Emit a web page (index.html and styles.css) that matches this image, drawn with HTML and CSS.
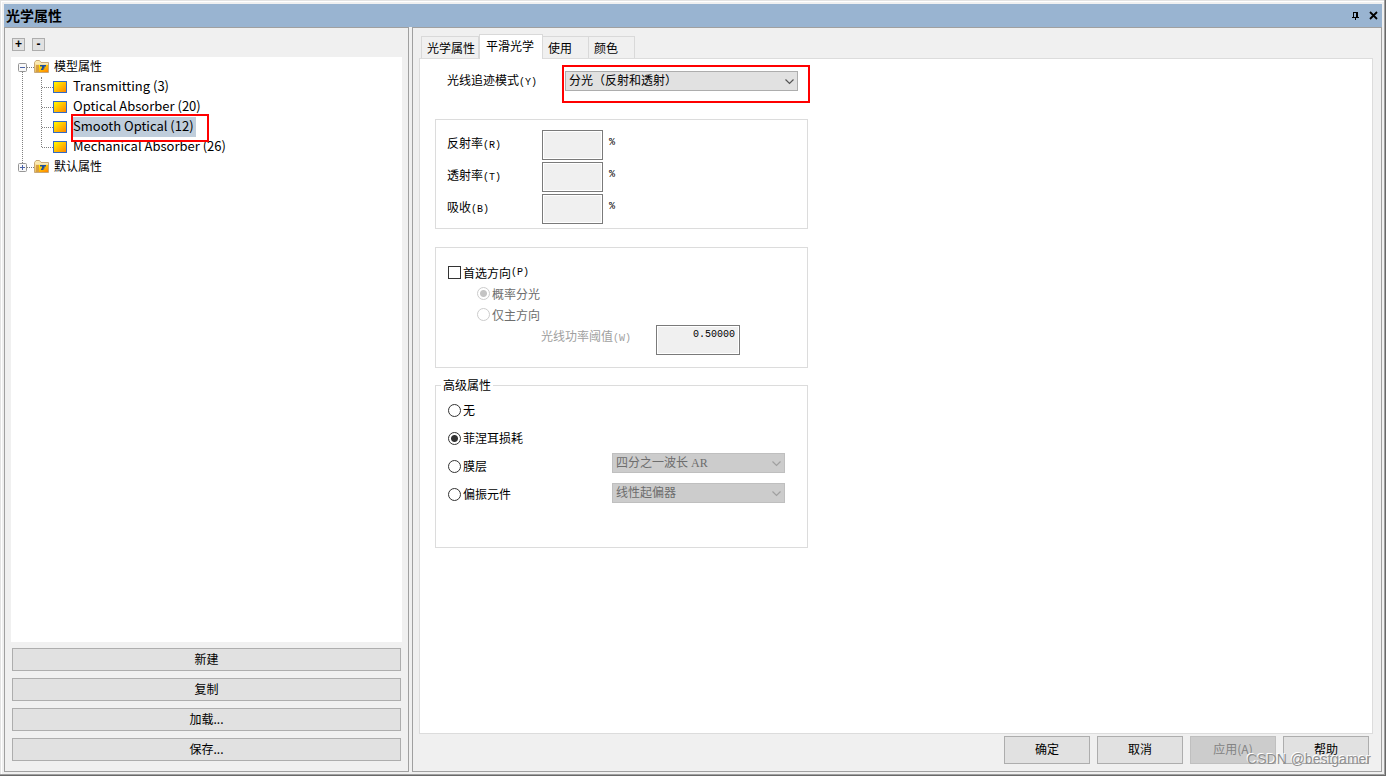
FILE: index.html
```html
<!DOCTYPE html>
<html lang="zh-CN">
<head>
    <meta charset="UTF-8">
    <meta name="viewport" content="width=device-width, initial-scale=1.0">
    <title>光学属性</title>
    <link rel="stylesheet" href="styles.css">
</head>
<body>
    <svg class="defs" width="0" height="0">
        <defs>
            <linearGradient id="gold" x1="0" y1="0" x2="1" y2="1">
                <stop offset="0" stop-color="#ffff00"/>
                <stop offset="1" stop-color="#ff8000"/>
            </linearGradient>
            <linearGradient id="folder-fill" x1="0" y1="0" x2="0" y2="1">
                <stop offset="0" stop-color="#fff0b8"/>
                <stop offset="1" stop-color="#e9bd55"/>
            </linearGradient>
            <symbol id="folder" viewBox="0 0 15 14">
                <path d="M0.5 12.5V2.5L2 0.5H5.5L7 2.5H14.5V12.5Z" fill="url(#folder-fill)" stroke="#c8a878"/>
                <path d="M1 3.5H14" stroke="#f8e8b8"/>
                <rect x="2" y="5" width="12" height="7" fill="url(#gold)"/>
                <path d="M2 5H5V12H2Z" fill="#d8a040"/>
                <path d="M6 5H12V6.500H10.500V8.500H9.500V10H7V8.500H8V6.500H6Z" fill="#204f9c"/>
            </symbol>
            <symbol id="swatch" viewBox="0 0 14 12">
                <rect x="0.5" y="0.5" width="13" height="11" fill="url(#gold)" stroke="#316ac5"/>
            </symbol>
            <symbol id="chevron" viewBox="0 0 9 6">
                <path d="M0.5 0.5L4.5 4.5L8.5 0.5" fill="none" stroke="currentColor" stroke-width="1.2"/>
            </symbol>
        </defs>
    </svg>

    <div class="window">
        <header class="titlebar">
            <h1>光学属性</h1>
            <button class="title-btn" aria-label="固定">
                <svg width="9" height="9" viewBox="0 0 9 9" shape-rendering="crispEdges"><path d="M2.5 6V1.5H6M1 6.5H8M4.5 7V9" fill="none" stroke="#000"/><path d="M5 1H7V6H5Z"/></svg>
            </button>
            <button class="title-btn" aria-label="关闭">
                <svg width="9" height="9" viewBox="0 0 9 9"><path d="M1 1L8 8M8 1L1 8" stroke="#000" stroke-width="1.8"/></svg>
            </button>
        </header>

        <div class="panes">
            <aside class="pane sidebar">
                <div class="tree-tools">
                    <button aria-label="展开">+</button>
                    <button aria-label="折叠">-</button>
                </div>
                <ul class="tree">
                    <li class="branch open">
                        <div class="node">
                            <svg class="expander" viewBox="0 0 9 9"><rect x="0.5" y="0.5" width="8" height="8" rx="1" fill="#f8f8f8" stroke="#969696"/><path d="M2 4.5H7" stroke="#4b63a7"/></svg>
                            <svg class="folder"><use href="#folder"/></svg>
                            <span>模型属性</span>
                        </div>
                        <ul class="leaves">
                            <li><svg class="swatch"><use href="#swatch"/></svg><span>Transmitting (3)</span></li>
                            <li><svg class="swatch"><use href="#swatch"/></svg><span>Optical Absorber (20)</span></li>
                            <li><svg class="swatch"><use href="#swatch"/></svg><span class="selected">Smooth Optical (12)</span><i class="mark mark-node"></i></li>
                            <li><svg class="swatch"><use href="#swatch"/></svg><span>Mechanical Absorber (26)</span></li>
                        </ul>
                    </li>
                    <li class="branch">
                        <div class="node">
                            <svg class="expander" viewBox="0 0 9 9"><rect x="0.5" y="0.5" width="8" height="8" rx="1" fill="#f8f8f8" stroke="#969696"/><path d="M2 4.5H7M4.5 2V7" stroke="#4b63a7"/></svg>
                            <svg class="folder"><use href="#folder"/></svg>
                            <span>默认属性</span>
                        </div>
                    </li>
                </ul>
                <div class="side-actions">
                    <button class="btn">新建</button>
                    <button class="btn">复制</button>
                    <button class="btn">加载...</button>
                    <button class="btn">保存...</button>
                </div>
            </aside>

            <main class="pane content">
                <nav class="tabs" role="tablist">
                    <button class="tab first" role="tab">光学属性</button>
                    <button class="tab active" role="tab" aria-selected="true">平滑光学</button>
                    <button class="tab" role="tab">使用</button>
                    <button class="tab" role="tab">颜色</button>
                </nav>

                <form class="page" id="props">
                    <div class="mode-row">
                        <label for="mode">光线追迹模式<span class="key">(Y)</span></label>
                        <div class="select mode">
                            <select id="mode"><option>分光（反射和透射）</option></select>
                            <svg class="chevron"><use href="#chevron"/></svg>
                            <i class="mark mark-mode"></i>
                        </div>
                    </div>

                    <div class="group rates">
                        <label for="refl">反射率<span class="key">(R)</span></label>
                        <input id="refl" type="text" disabled>
                        <span class="key">%</span>
                        <label for="trans">透射率<span class="key">(T)</span></label>
                        <input id="trans" type="text" disabled>
                        <span class="key">%</span>
                        <label for="absorb">吸收<span class="key">(B)</span></label>
                        <input id="absorb" type="text" disabled>
                        <span class="key">%</span>
                    </div>

                    <div class="group direction">
                        <label class="choice"><input type="checkbox">首选方向<span class="key">(P)</span></label>
                        <label class="choice sub"><input type="radio" name="split" checked disabled>概率分光</label>
                        <label class="choice sub"><input type="radio" name="split" disabled>仅主方向</label>
                        <div class="threshold">
                            <label for="power">光线功率阈值<span class="key">(W)</span></label>
                            <input id="power" type="text" value="0.50000" disabled>
                        </div>
                    </div>

                    <fieldset class="group advanced">
                        <legend>高级属性</legend>
                        <div class="advanced-body">
                            <div class="options">
                                <label class="choice"><input type="radio" name="adv">无</label>
                                <label class="choice"><input type="radio" name="adv" checked>菲涅耳损耗</label>
                                <label class="choice"><input type="radio" name="adv">膜层</label>
                                <label class="choice"><input type="radio" name="adv">偏振元件</label>
                            </div>
                            <div class="option-values">
                                <div class="select">
                                    <select aria-label="膜层" disabled><option>四分之一波长 AR</option></select>
                                    <svg class="chevron"><use href="#chevron"/></svg>
                                </div>
                                <div class="select">
                                    <select aria-label="偏振元件" disabled><option>线性起偏器</option></select>
                                    <svg class="chevron"><use href="#chevron"/></svg>
                                </div>
                            </div>
                        </div>
                    </fieldset>
                </form>

                <footer class="actions">
                    <button class="btn">确定</button>
                    <button class="btn">取消</button>
                    <button class="btn" disabled>应用(A)</button>
                    <button class="btn">帮助</button>
                </footer>
            </main>
        </div>
        <div class="watermark">CSDN @bestgamer</div>
    </div>
</body>
</html>
```

FILE: styles.css
```css
* {
    box-sizing: border-box;
}
body {
    margin: 0;
    background-color: #f0f0f0;
    color: #000;
    font-family: "Noto Sans CJK SC", sans-serif;
    font-size: 12px;
    line-height: 16px;
}
button, input, select {
    font: inherit;
    color: inherit;
    margin: 0;
}
ul {
    list-style: none;
    margin: 0;
    padding: 0;
}
.defs {
    position: absolute;
}

/* window frame */
.window {
    position: relative;
    display: flex;
    flex-direction: column;
    height: 100vh;
    padding: 4px 3px 3px 4px;
    border-right: 1px solid #696969;
    border-bottom: 1px solid #696969;
    box-shadow: inset -1px -1px #a0a0a0, inset 1px 1px #e3e3e3, inset 2px 2px #fff;
}
.titlebar {
    display: flex;
    align-items: center;
    height: 23px;
    flex: none;
    padding: 0 0 0 2px;
    background-color: #99b4d1;
}
.titlebar h1 {
    flex: 1;
    margin: 0;
    padding-bottom: 2px;
    font-size: 14px;
    font-weight: bold;
}
.title-btn {
    display: flex;
    justify-content: center;
    width: 18px;
    padding: 0;
    border: none;
    background: none;
}
.panes {
    display: flex;
    flex: 1;
    gap: 3px;
    min-height: 0;
}
.pane {
    display: flex;
    flex-direction: column;
    border: 1px solid #a0a0a0;
}

/* left side */
.sidebar {
    width: 405px;
    flex: none;
    padding: 10px 6px;
}
.tree-tools {
    display: flex;
    gap: 7px;
    padding-left: 1px;
    margin-bottom: 6px;
}
.tree-tools button {
    width: 13px;
    height: 13px;
    padding: 0;
    border: 1px solid #adadad;
    background-color: #e1e1e1;
    font: bold 12px/11px "Liberation Sans", sans-serif;
}
.tree {
    flex: 1;
    padding-left: 7px;
    background-color: #fff;
}
.branch {
    position: relative;
}
.branch.open::before {
    content: "";
    position: absolute;
    left: 4px;
    top: 15px;
    bottom: -6px;
    border-left: 1px dotted #808080;
}
.node {
    position: relative;
    display: flex;
    align-items: center;
    height: 20px;
}
.node span {
    padding-bottom: 2px;
}
.node::before {
    content: "";
    position: absolute;
    left: 9px;
    width: 7px;
    top: 10px;
    border-top: 1px dotted #808080;
}
.expander {
    width: 9px;
    height: 9px;
    margin-right: 7px;
}
.folder {
    width: 15px;
    height: 14px;
    margin-right: 5px;
}
.leaves {
    position: relative;
    padding-left: 35px;
}
.leaves::before {
    content: "";
    position: absolute;
    left: 23px;
    top: 0;
    bottom: 10px;
    border-left: 1px dotted #808080;
}
.leaves li {
    position: relative;
    display: flex;
    align-items: center;
    height: 20px;
    font-size: 13px;
}
.leaves li::before {
    content: "";
    position: absolute;
    left: -11px;
    width: 11px;
    top: 10px;
    border-top: 1px dotted #808080;
}
.leaves span {
    padding: 0 2px 2px;
    line-height: 18px;
}
.leaves .selected {
    background-color: #bfcddb;
}
.swatch {
    width: 14px;
    height: 12px;
    margin-right: 4px;
}
.side-actions {
    display: flex;
    flex-direction: column;
    gap: 7px;
    padding: 6px 1px 0;
}
.btn {
    height: 23px;
    padding: 0 0 2px;
    border: 1px solid #adadad;
    background-color: #e1e1e1;
}
.btn:disabled {
    background-color: #ccc;
    border-color: #bfbfbf;
    color: #838383;
}

/* right side */
.content {
    flex: 1;
    padding: 6px 8px 7px 6px;
}
.tabs {
    display: flex;
    align-items: flex-end;
    height: 24px;
    padding-left: 2px;
    flex: none;
}
.tab {
    width: 46px;
    height: 22px;
    padding: 0 0 0 5px;
    border: 1px solid #d9d9d9;
    border-width: 1px 1px 0 0;
    background-color: #f0f0f0;
    text-align: left;
}
.tab.first {
    width: 58px;
    border-left-width: 1px;
}
.tab.active {
    position: relative;
    width: 64px;
    height: 25px;
    margin-bottom: -1px;
    padding: 0 0 2px 6px;
    border-left-width: 1px;
    background-color: #fff;
}
.page {
    flex: 1;
    padding: 12px 15px;
    border: 1px solid #dcdcdc;
    background-color: #fff;
}
.key {
    font-family: "Liberation Mono", monospace;
    font-size: 10px;
}
.mode-row {
    display: flex;
    align-items: center;
    padding-left: 12px;
    margin-bottom: 28px;
}
.mode-row label {
    width: 118px;
}
.select {
    position: relative;
    width: 173px;
}
.select.mode {
    width: 233px;
}
.select select {
    display: block;
    appearance: none;
    width: 100%;
    height: 20px;
    padding: 0 3px;
    border: 1px solid #adadad;
    border-radius: 0;
    background-color: #e1e1e1;
    font-family: "Liberation Serif", "Noto Sans CJK SC", serif;
}
.select select:disabled {
    background-color: #ccc;
    border-color: #bfbfbf;
    color: #6d6d6d;
    opacity: 1;
}
.select .chevron {
    position: absolute;
    right: 4px;
    top: 8px;
    width: 9px;
    height: 6px;
    color: #555;
    pointer-events: none;
}
.select select:disabled + .chevron {
    color: #a0a0a0;
}
.group {
    width: 373px;
    margin: 0;
    padding: 0 11px;
    border: 1px solid #dcdcdc;
}
.group input[type="text"] {
    height: 30px;
    padding: 0 4px 12px;
    border: 1px solid #7a7a7a;
    background-color: #f0f0f0;
    box-shadow: inset 0 0 0 1px #fff;
    color: #000;
    font-family: "Liberation Mono", monospace;
    font-size: 10px;
    text-align: right;
}
.rates {
    display: grid;
    grid-template-columns: 95px 61px 1fr;
    row-gap: 2px;
    padding-top: 10px;
    padding-bottom: 4px;
    margin-bottom: 18px;
    line-height: 26px;
}
.rates > .key {
    padding-left: 6px;
}
.rates input {
    width: 61px;
}
.direction {
    padding-top: 14px;
    padding-bottom: 12px;
    margin-bottom: 9px;
}
.choice {
    display: flex;
    align-items: center;
    height: 21px;
    padding-left: 1px;
}
.choice.sub {
    padding-left: 30px;
    color: #6d6d6d;
}
.choice input {
    appearance: none;
    width: 13px;
    height: 13px;
    margin-right: 2px;
    border: 1px solid #333;
    background-color: #fff;
}
.choice input[type="radio"] {
    border-radius: 50%;
}
.choice input[type="radio"]:checked {
    background: radial-gradient(circle, #333 3px, #fff 4px);
}
.choice input:disabled {
    border-color: #ccc;
}
.choice input[type="radio"]:checked:disabled {
    background: radial-gradient(circle, #c4c4c4 3px, #fff 4px);
}
.threshold {
    display: flex;
    padding-left: 94px;
}
.threshold label {
    width: 115px;
    line-height: 22px;
    color: #a0a0a0;
}
.threshold input {
    width: 84px;
}
.advanced legend {
    margin-left: -6px;
    padding: 0 2px;
}
.advanced-body {
    display: flex;
    padding: 3px 0 39px;
}
.options {
    width: 165px;
}
.options .choice {
    height: 28px;
}
.option-values {
    display: flex;
    flex-direction: column;
    gap: 10px;
    padding-top: 57px;
}
.actions {
    display: flex;
    justify-content: flex-end;
    gap: 7px;
    padding: 2px 4px 0;
}
.actions .btn {
    width: 86px;
    height: 28px;
}

/* red highlight frames */
.mark {
    position: absolute;
    border: 2px solid #f00;
    pointer-events: none;
}
.mark-node {
    left: 18px;
    top: -3px;
    width: 138px;
    height: 28px;
    z-index: 1;
}
.mark-mode {
    left: -3px;
    top: -6px;
    right: -12px;
    bottom: -12px;
}

.watermark {
    position: absolute;
    right: 14px;
    bottom: 8px;
    color: #909090;
    font-family: "Liberation Sans", sans-serif;
    font-size: 14px;
    text-shadow: -1px -1px #fff;
    pointer-events: none;
}
```
